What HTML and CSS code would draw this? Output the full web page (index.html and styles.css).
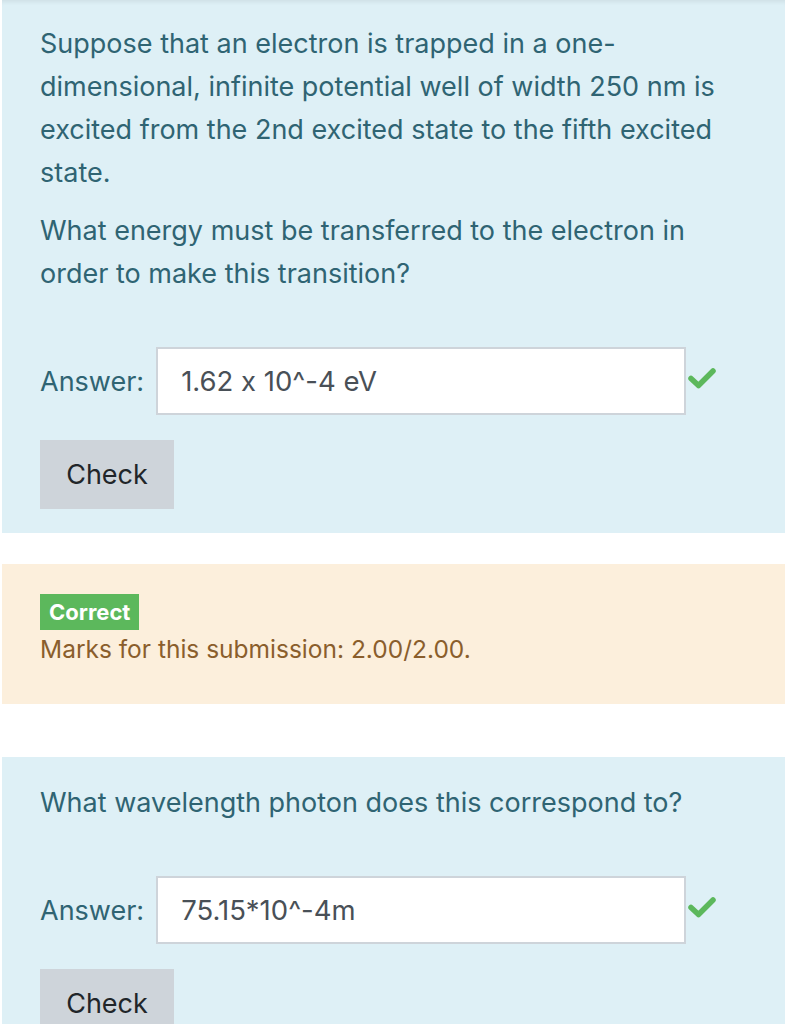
FILE: index.html
```html
<!DOCTYPE html>
<html lang="en">
<head>
    <meta charset="UTF-8">
    <meta name="viewport" content="width=device-width, initial-scale=1.0">
    <title>Quiz</title>
    <link rel="stylesheet" href="styles.css">
</head>
<body>

<main class="quiz">

    <div class="qtext-panel first">
        <p>Suppose that an electron is trapped in a one-dimensional, infinite potential well of width 250 nm is excited from the 2nd excited state to the fifth excited state.</p>
        <p>What energy must be transferred to the electron in order to make this transition?</p>

        <div class="answer-row">
            <label>Answer:</label>
            <div class="answer-box">1.62 x 10^-4 eV</div>
            <svg class="tick" viewBox="0 0 28 22" width="28" height="22">
                <path d="M3 11.5 L10.5 18.5 L25 4" fill="none" stroke="#5cb85c" stroke-width="5.5" stroke-linecap="round" stroke-linejoin="round"/>
            </svg>
        </div>

        <button class="check-btn">Check</button>
    </div>

    <div class="feedback-panel">
        <span class="badge">Correct</span>
        <div class="marks">Marks for this submission: 2.00/2.00.</div>
    </div>

    <div class="qtext-panel">
        <p>What wavelength photon does this correspond to?</p>

        <div class="answer-row">
            <label>Answer:</label>
            <div class="answer-box">75.15*10^-4m</div>
            <svg class="tick" viewBox="0 0 28 22" width="28" height="22">
                <path d="M3 11.5 L10.5 18.5 L25 4" fill="none" stroke="#5cb85c" stroke-width="5.5" stroke-linecap="round" stroke-linejoin="round"/>
            </svg>
        </div>

        <button class="check-btn">Check</button>
    </div>

</main>

</body>
</html>
```

FILE: styles.css
```css
*{
  margin: 0px;
  padding: 0px;
  box-sizing: border-box;
}
body{
  background-color: #ffffff;
  font-family: "Inter", "Liberation Sans", sans-serif;
  font-feature-settings: "calt" 0;
  overflow: hidden;
}
.quiz{
  padding-left: 2px;
}

.qtext-panel{
  background-color: #def0f6;
  color: #2f6473;
  padding: 24px 38px 24px 38px;
  font-size: 27px;
  line-height: 43px;
}
.qtext-panel.first{
  padding-top: 22px;
  box-shadow: inset 0 5px 4px -3px rgba(0,0,0,0.07);
}
.qtext-panel p{
  margin-bottom: 15px;
}

.answer-row{
  display: flex;
  align-items: center;
  margin-top: 52px;
}
.answer-row label{
  font-size: 27px;
  margin-right: 12px;
}
.answer-box{
  width: 530px;
  height: 68px;
  background: #fff;
  border: 2px solid #ced4da;
  color: #495057;
  font-size: 27.5px;
  line-height: 64px;
  padding-left: 23px;
}
.tick{
  margin-left: 2px;
  margin-top: -6px;
}

.check-btn{
  display: block;
  margin-top: 25px;
  width: 134px;
  height: 69px;
  border: none;
  background-color: #ced4da;
  color: #212529;
  font-family: inherit;
  font-feature-settings: inherit;
  font-size: 27px;
}

.feedback-panel{
  background-color: #fcefdc;
  color: #8a5e2c;
  margin: 31px 0 53px 0;
  padding: 30px 38px 40px 38px;
  height: 140px;
}
.badge{
  display: inline-block;
  background-color: #5cb85c;
  color: #fff;
  font-weight: bold;
  font-size: 22px;
  line-height: 36px;
  padding: 0 9px;
}
.marks{
  font-size: 24.5px;
  line-height: 38px;
}
```
